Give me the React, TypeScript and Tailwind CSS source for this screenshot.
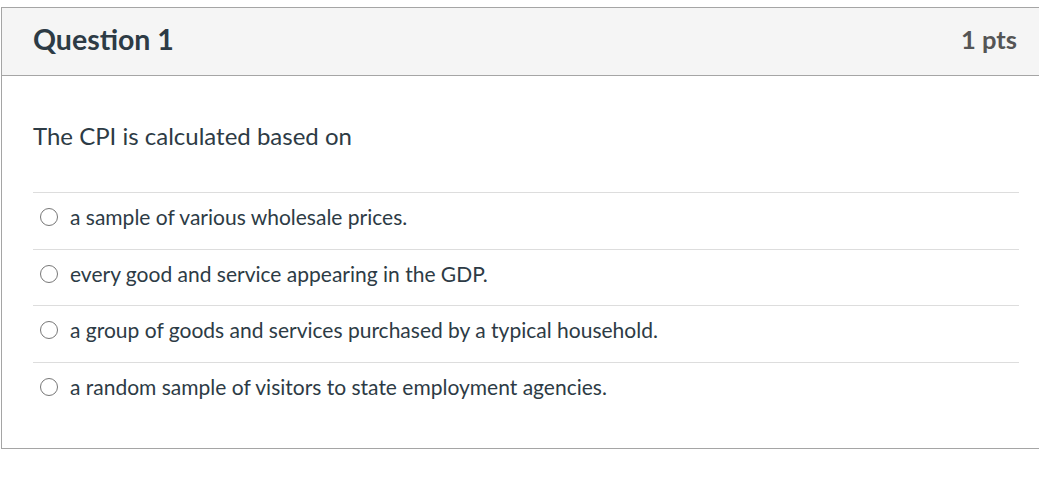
import React from 'react';

const answers = [
  'a sample of various wholesale prices.',
  'every good and service appearing in the GDP.',
  'a group of goods and services purchased by a typical household.',
  'a random sample of visitors to state employment agencies.',
];

export default function App() {
  return (
    <div className="min-h-screen bg-white pt-[7px] pl-[1px] overflow-hidden" style={{ fontFamily: 'Lato, "Noto Sans", sans-serif' }}>
      <div className="w-[1060px] border border-[#a5a5a5] border-r-0">
        {/* Header */}
        <div className="h-[68px] bg-[#f5f5f5] border-b border-[#a5a5a5] flex items-center justify-between pl-[31px] pr-[44px] pb-[4px]">
          <h2 className="text-[28.5px] font-bold text-[#2d3b45] leading-none">Question 1</h2>
          <span className="text-[25.5px] font-bold text-[#555555] leading-none">1 pts</span>
        </div>

        {/* Body */}
        <div className="pl-[31px] pr-[42px] pt-[45px] pb-[30px]">
          <p className="text-[24px] text-[#2d3b45] leading-[30px] mb-[41px]">The CPI is calculated based on</p>
          <div>
            {answers.map((a, i) => (
              <div key={i} className="h-[56.5px] border-t border-[#dddddd] flex items-start pt-[12px]">
                <span className="mt-[3px] ml-[7px] mr-[12px] w-[18px] h-[18px] rounded-full border-[1.5px] border-[#777777]" />
                <span className="text-[21px] text-[#2d3b45] leading-[24px]">{a}</span>
              </div>
            ))}
          </div>
        </div>
      </div>
    </div>
  );
}
